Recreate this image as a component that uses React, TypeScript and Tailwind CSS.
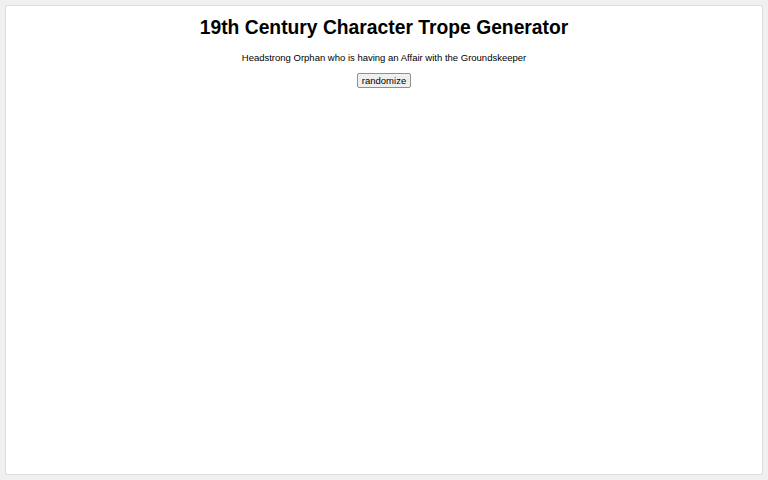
import { useState } from 'react';

const adjectives = ['Headstrong', 'Melancholy', 'Penniless', 'Consumptive', 'Devout'];
const nouns = ['Orphan', 'Governess', 'Curate', 'Heiress', 'Widower'];
const secrets = [
    'is having an Affair with the Groundskeeper',
    'has a Mad Wife in the Attic',
    'is Secretly an Heir',
    'once Fought a Duel',
];

const pick = (list: string[]) => list[Math.floor(Math.random() * list.length)];

const App = () => {
    const [trope, setTrope] = useState('Headstrong Orphan who is having an Affair with the Groundskeeper');

    const randomize = () => {
        setTrope(`${pick(adjectives)} ${pick(nouns)} who ${pick(secrets)}`);
    };

    return (
        <div className="h-[480px] bg-[#f0f0f0] p-[5px] font-['Liberation_Sans',Arial,sans-serif]">
            <div className="h-full bg-white border border-[#dcdcdc] flex flex-col items-center pt-[9px]">
                <h1 className="text-[19.3px] leading-[26px] font-bold text-black">19th Century Character Trope Generator</h1>
                <p className="mt-[11px] text-[9.5px] leading-[12px] text-black">{trope}</p>
                <button
                    onClick={randomize}
                    className="mt-[9px] h-[15px] px-[4px] text-[9.5px] leading-[12px] text-black bg-[#efefef] border border-[#8f8f8f] rounded-[2px]"
                >
                    randomize
                </button>
            </div>
        </div>
    );
};

export default App;
